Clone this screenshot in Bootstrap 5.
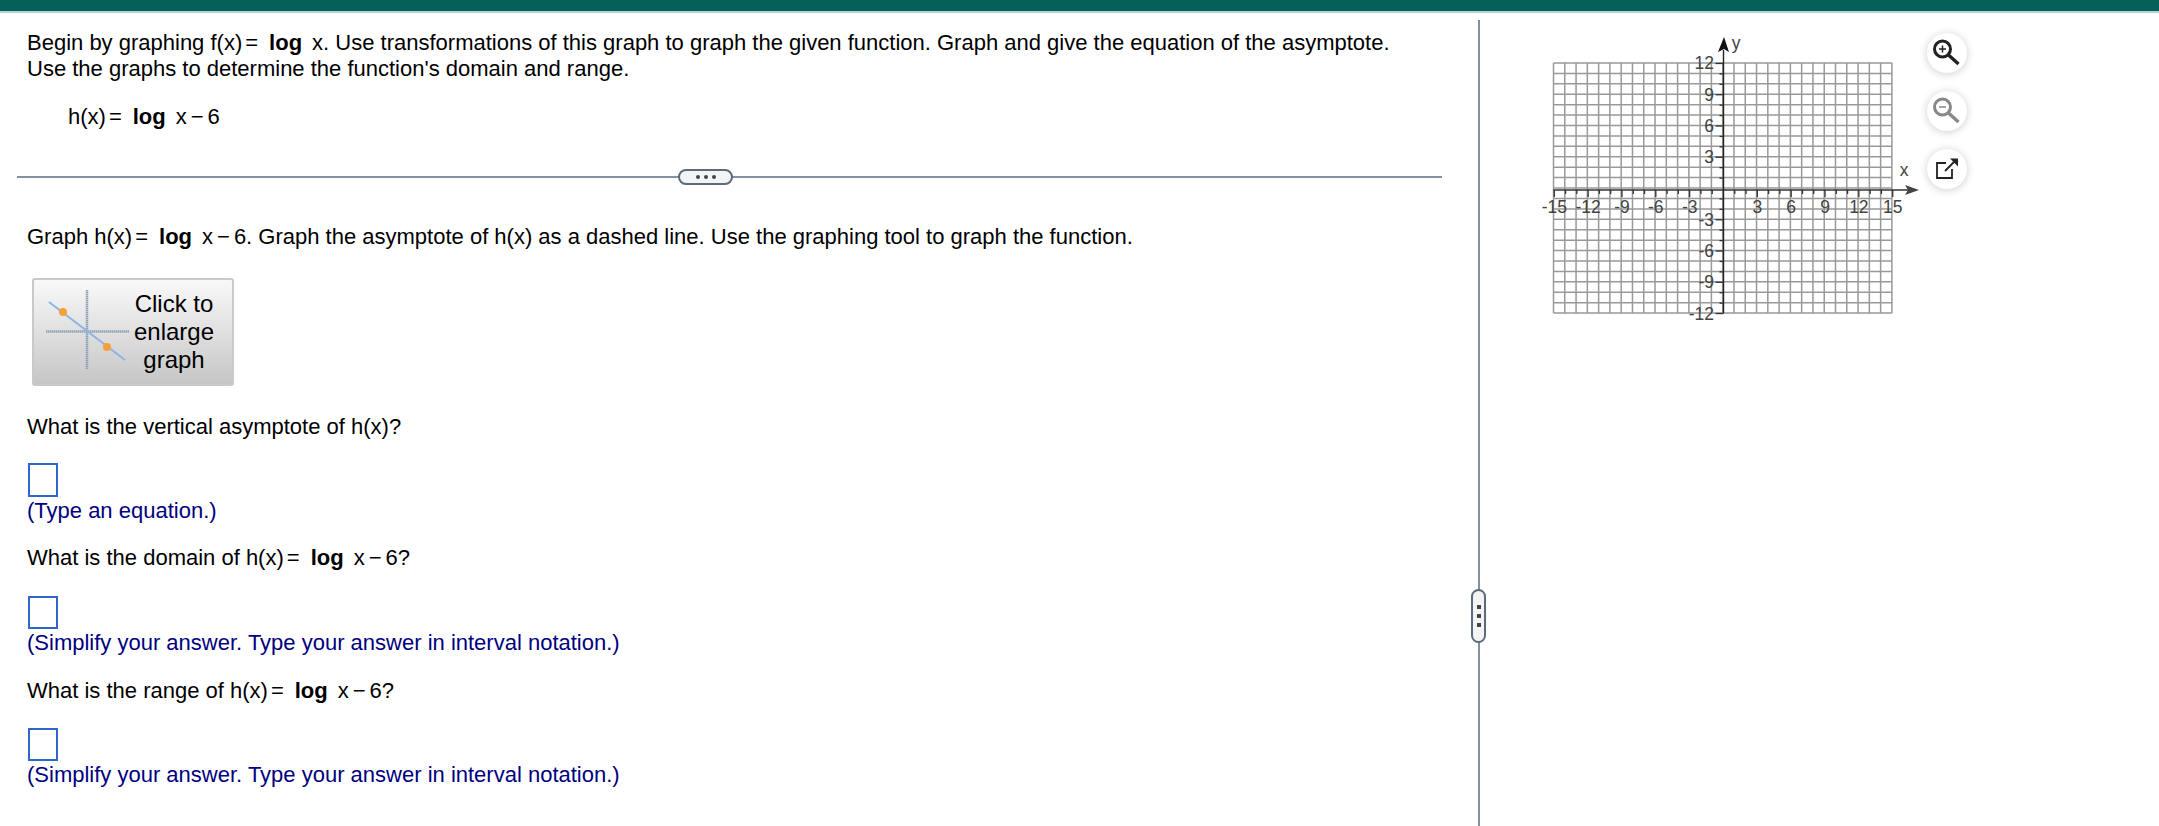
<!DOCTYPE html>
<html lang="en">
<head>
  <meta charset="UTF-8">
  <title>Graph h(x) = log x - 6</title>
  <link href="https://cdn.jsdelivr.net/npm/bootstrap@5.3.0/dist/css/bootstrap.min.css" rel="stylesheet">
  <style>
    html, body {
      height: 100%;
      overflow: hidden;
    }
    body {
      background: #fff;
      color: #000;
      font-family: "Liberation Sans", Arial, sans-serif;
      font-size: 22px;
      line-height: 26px;
    }
    .top-strip {
      height: 13px;
      background: #06605a;
      border-bottom: 2px solid #b9d0ce;
    }
    .work-area {
      height: 813px;
    }
    .left-pane {
      width: 1478px;
      flex: none;
      padding: 17px 0 0 27px;
    }
    .left-pane p {
      margin: 0;
    }
    .eq-line {
      margin: 22px 0 0 41px !important;
    }
    .eq-sign {
      margin: 0 11px 0 3px;
    }
    .log-word {
      margin-right: 10px;
    }
    .minus-sign {
      margin: 0 4px;
    }
    .h-divider {
      height: 16px;
      margin: 39px 36px 39px -10px;
    }
    .h-divider::before {
      content: "";
      display: block;
      border-top: 2px solid #84909f;
      position: relative;
      top: 7px;
    }
    .h-handle {
      width: 55px;
      height: 16px;
      margin: -2px 0 0 661px;
      position: relative;
      background: #f3f4f6;
      border: 2px solid #5b6b7b;
      border-radius: 8px;
      gap: 4px;
    }
    .grip-dot {
      width: 4px;
      height: 4px;
      background: #444;
      border-radius: 50%;
    }
    .enlarge-btn {
      width: 202px;
      height: 108px;
      margin: 28px 0 28px 5px;
      padding: 0;
      border: 2px solid #c9c9c9;
      border-radius: 3px;
      background: linear-gradient(#f9f9f9, #c6c6c6);
      font-size: 24px;
      line-height: 28px;
      color: #000;
    }
    .enlarge-text {
      width: 92px;
      margin-left: -8px;
      text-align: center;
    }
    .answer-box {
      width: 30px;
      height: 34px;
      margin: 23px 0 1px 1px;
      border: 2px solid #2f66c8;
      background: #fff;
    }
    .answer-box.short-box {
      height: 33px;
      margin-top: 25px;
    }
    .answer-box.last-box {
      margin-top: 24px;
    }
    .hint-text {
      color: #000080;
    }
    .next-question {
      margin-top: 21px !important;
    }
    .next-question.range-line {
      margin-top: 22px !important;
    }
    .right-pane {
      margin-top: 7px;
      border-left: 2px solid #84909f;
      flex: 1;
      position: relative;
    }
    .v-handle {
      position: absolute;
      left: -9px;
      top: 569px;
      width: 15px;
      height: 54px;
      background: #f3f4f6;
      border: 2px solid #5b6b7b;
      border-radius: 8px;
      gap: 5px;
    }
    .v-handle .grip-dot {
      border-radius: 0;
    }
    .graph-box {
      width: 400px;
      height: 310px;
      margin-left: 40px;
      flex: none;
    }
    .graph-box text {
      font-family: "Liberation Sans", Arial, sans-serif;
      font-size: 17.5px;
      fill: #444;
    }
    .tool-column {
      margin: 13px 0 0 7px;
      gap: 18px;
    }
    .tool-btn {
      width: 40px;
      height: 40px;
      padding: 0;
      border: 0;
      border-radius: 50%;
      background: #fff;
      box-shadow: 0 1px 8px rgba(0, 0, 0, .2);
    }
    .tool-btn svg {
      display: block;
    }
  </style>
</head>
<body>

<div class="top-strip"></div>

<div class="work-area d-flex">

  <!-- Question side -->
  <div class="left-pane">
    <p>Begin by graphing f(x)<span class="eq-sign">=</span><b class="log-word">log</b>x. Use transformations of this graph to graph the given function. Graph and give the equation of the asymptote.<br>Use the graphs to determine the function's domain and range.</p>
    <p class="eq-line">h(x)<span class="eq-sign">=</span><b class="log-word">log</b>x<span class="minus-sign">−</span>6</p>

    <div class="h-divider">
      <div class="h-handle d-flex align-items-center justify-content-center">
        <span class="grip-dot"></span><span class="grip-dot"></span><span class="grip-dot"></span>
      </div>
    </div>

    <p>Graph h(x)<span class="eq-sign">=</span><b class="log-word">log</b>x<span class="minus-sign">−</span>6. Graph the asymptote of h(x) as a dashed line. Use the graphing tool to graph the function.</p>

    <button type="button" class="enlarge-btn d-flex align-items-center">
      <svg width="102" height="104" viewBox="32 280 102 104">
        <line x1="85" y1="290" x2="85" y2="369" stroke="#8fa3bb" stroke-width="2.5" stroke-dasharray="1.5 .5"/>
        <line x1="44" y1="331.5" x2="127" y2="331.500" stroke="#8fa3bb" stroke-width="2.5" stroke-dasharray="1.5 .5"/>
        <line x1="47" y1="302" x2="123" y2="360" stroke="#8db4e6" stroke-width="2"/>
        <circle cx="61" cy="312" r="4" fill="#f7a035"/>
        <circle cx="105" cy="347" r="4" fill="#f7a035"/>
      </svg>
      <span class="enlarge-text">Click to enlarge graph</span>
    </button>

    <p>What is the vertical asymptote of h(x)?</p>
    <div class="answer-box"></div>
    <p class="hint-text">(Type an equation.)</p>

    <p class="next-question">What is the domain of h(x)<span class="eq-sign">=</span><b class="log-word">log</b>x<span class="minus-sign">−</span>6?</p>
    <div class="answer-box short-box"></div>
    <p class="hint-text">(Simplify your answer. Type your answer in interval notation.)</p>

    <p class="next-question range-line">What is the range of h(x)<span class="eq-sign">=</span><b class="log-word">log</b>x<span class="minus-sign">−</span>6?</p>
    <div class="answer-box short-box last-box"></div>
    <p class="hint-text">(Simplify your answer. Type your answer in interval notation.)</p>
  </div>

  <!-- Graph side -->
  <div class="right-pane d-flex align-items-start">
    <div class="v-handle d-flex flex-column align-items-center justify-content-center">
      <span class="grip-dot"></span><span class="grip-dot"></span><span class="grip-dot"></span>
    </div>

    <svg class="graph-box" id="graph" viewBox="1520 20 400 310"></svg>

    <div class="tool-column d-flex flex-column">
      <button type="button" class="tool-btn" aria-label="Zoom in">
        <svg width="40" height="40" viewBox="0 0 40 40" fill="none" stroke="#222">
          <circle cx="15.5" cy="16" r="8" stroke-width="3"/>
          <path d="M15.5 12.5v7M12 16h7" stroke-width="1.5"/>
          <path d="M21.500 22l10 9" stroke-width="3.4"/>
        </svg>
      </button>
      <button type="button" class="tool-btn" aria-label="Zoom out">
        <svg width="40" height="40" viewBox="0 0 40 40" fill="none" stroke="#888">
          <circle cx="15.5" cy="16" r="8" stroke-width="3"/>
          <path d="M12 16h7" stroke-width="1.5"/>
          <path d="M21.500 22l10 9" stroke-width="3.4"/>
        </svg>
      </button>
      <button type="button" class="tool-btn" aria-label="Open in new window">
        <svg width="40" height="40" viewBox="0 0 40 40" fill="none" stroke="#222">
          <path d="M19 14h-9v15h15v-9" stroke-width="1.8"/>
          <path d="M18 22l10-10" stroke-width="1.8"/>
          <path d="M23 9.500h8v8z" fill="#222" stroke="none"/>
        </svg>
      </button>
    </div>
  </div>
</div>

<script src="https://cdn.jsdelivr.net/npm/bootstrap@5.3.0/dist/js/bootstrap.bundle.min.js"></script>

<script>
  // draw the coordinate grid, values are the page pixels of the picture
  const left = 1553.5, top0 = 63, unitX = 11.28, unitY = 10.42;
  const originX = 1723.5, originY = 190;
  let out = '';

  for (let i = 0; i <= 30; i++) {
    const x = left + i * unitX;
    out += `<line x1="${x}" y1="63" x2="${x}" y2="313" stroke="#999" stroke-width="1.5"/>`;
  }
  for (let i = 0; i <= 24; i++) {
    const y = top0 + i * unitY;
    out += `<line x1="1553.5" y1="${y}" x2="1892" y2="${y}" stroke="#999" stroke-width="1.5"/>`;
  }

  // axes
  out += `<line x1="1553.5" y1="${originY}" x2="1908" y2="${originY}" stroke="#333" stroke-width="1.4"/>`;
  out += `<line x1="${originX}" y1="50" x2="${originX}" y2="313" stroke="#222" stroke-width="1.4"/>`;
  out += '<path d="M1919 190l-14-5 3 5-3 5z" fill="#444"/>';
  out += '<path d="M1724 37l-6 15 6-3 5 3z" fill="#111"/>';

  // ticks and labels
  for (let n = -15; n <= 15; n++) {
    if (n === 0) continue;
    const x = originX + n * unitX;
    const len = n % 3 === 0 ? 7 : 4;
    out += `<line x1="${x}" y1="${originY}" x2="${x}" y2="${originY + len}" stroke="#333" stroke-width="1.3"/>`;
    if (n % 3 === 0) out += `<text x="${x}" y="213" text-anchor="middle">${n}</text>`;
  }
  for (let n = -12; n <= 12; n++) {
    if (n === 0) continue;
    const y = 188.5 - n * unitY;
    const len = n % 3 === 0 ? 8 : 4;
    out += `<line x1="${originX}" y1="${y}" x2="${originX - len}" y2="${y}" stroke="#333" stroke-width="1.3"/>`;
    if (n % 3 === 0) out += `<text x="1714" y="${y + 6}" text-anchor="end">${n}</text>`;
  }
  out += '<text x="1904" y="176" text-anchor="middle">x</text>';
  out += '<text x="1736" y="49" text-anchor="middle">y</text>';

  document.getElementById('graph').innerHTML = out;
</script>

</body>
</html>
